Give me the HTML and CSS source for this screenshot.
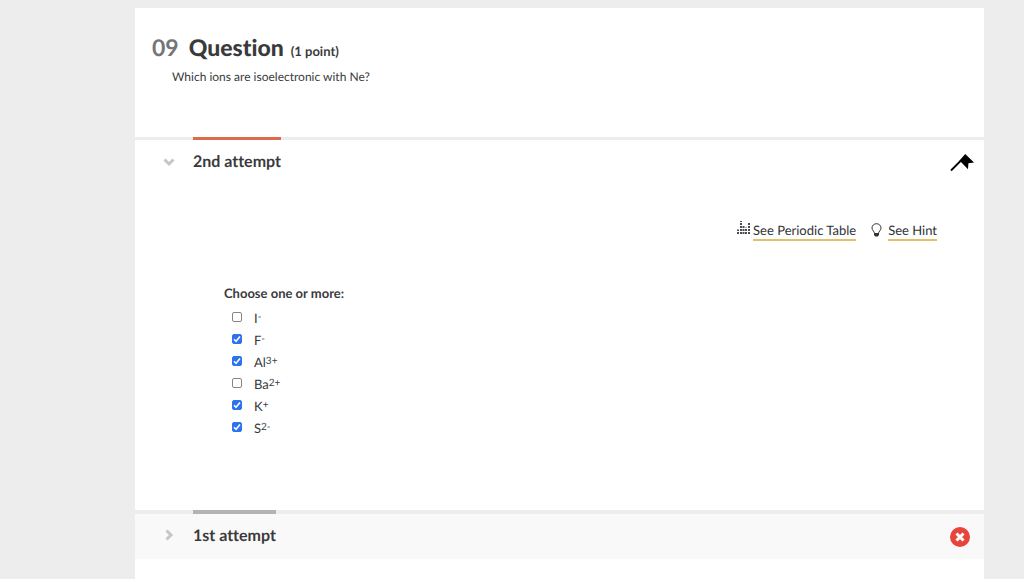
FILE: index.html
```html
<!DOCTYPE html>
<html lang="en">
<head>
    <meta charset="UTF-8">
    <meta name="viewport" content="width=device-width, initial-scale=1.0">
    <title>09 Question</title>
    <link rel="stylesheet" href="styles.css">
</head>
<body>
    <main class="card">
        <header class="question">
            <h1 class="question-title">
                <span class="question-number">09</span>
                <span class="question-name">Question</span>
                <span class="question-points">(1 point)</span>
            </h1>
            <p class="question-text">Which ions are isoelectronic with Ne?</p>
        </header>

        <section class="attempt">
            <div class="attempt-header">
                <button type="button" class="attempt-toggle open" aria-expanded="true">
                    <svg class="chevron" viewBox="0 0 12 12" aria-hidden="true">
                        <path d="M1.500 3.500 L6 8 L10.500 3.500"/>
                    </svg>
                    <span class="attempt-name">2nd attempt</span>
                </button>
                <svg class="flag" viewBox="0 0 24 18" aria-hidden="true">
                    <path d="M1 16.500 L10.500 7" fill="none" stroke="#000" stroke-width="1.800"/>
                    <path d="M15.200 0 L24 8.600 L18.400 9.200 L18 15.200 L9.500 6.400 Z"/>
                </svg>
            </div>

            <div class="attempt-body">
                <nav class="tools">
                    <a href="#periodic-table" class="tool">
                        <svg class="icon-table" viewBox="0 0 13 13" aria-hidden="true">
                            <path d="M1 13V8.500 M4 13V0 M6.500 13V4.500 M9 13V6.500 M12 13V1.500"/>
                        </svg>
                        <span>See Periodic Table</span>
                    </a>
                    <a href="#hint" class="tool">
                        <svg class="icon-bulb" viewBox="0 0 11 14" aria-hidden="true">
                            <path d="M3.500 10.500 C3.500 8.500 1 7.500 1 4.900 A4.500 4.200 0 0 1 10 4.900 C10 7.500 7.500 8.500 7.500 10.500 Z"/>
                            <path class="bulb-base" d="M3 10 H8 V12 L6.800 13.500 H4.200 L3 12 Z"/>
                        </svg>
                        <span>See Hint</span>
                    </a>
                </nav>

                <fieldset class="choices">
                    <legend>Choose one or more:</legend>
                    <div class="choice">
                        <input type="checkbox" id="ion-i">
                        <label for="ion-i">I<sup>-</sup></label>
                    </div>
                    <div class="choice">
                        <input type="checkbox" id="ion-f" checked>
                        <label for="ion-f">F<sup>-</sup></label>
                    </div>
                    <div class="choice">
                        <input type="checkbox" id="ion-al" checked>
                        <label for="ion-al">Al<sup>3+</sup></label>
                    </div>
                    <div class="choice">
                        <input type="checkbox" id="ion-ba">
                        <label for="ion-ba">Ba<sup>2+</sup></label>
                    </div>
                    <div class="choice">
                        <input type="checkbox" id="ion-k" checked>
                        <label for="ion-k">K<sup>+</sup></label>
                    </div>
                    <div class="choice">
                        <input type="checkbox" id="ion-s" checked>
                        <label for="ion-s">S<sup>2-</sup></label>
                    </div>
                </fieldset>
            </div>
        </section>

        <section class="attempt collapsed">
            <div class="attempt-header">
                <button type="button" class="attempt-toggle" aria-expanded="false">
                    <svg class="chevron" viewBox="0 0 12 12" aria-hidden="true">
                        <path d="M3.500 1.500 L8 6 L3.500 10.500"/>
                    </svg>
                    <span class="attempt-name">1st attempt</span>
                </button>
                <svg class="wrong" viewBox="0 0 20 20" aria-hidden="true">
                    <circle cx="10" cy="10" r="10" fill="#e5453b"/>
                    <path d="M6.500 6.500 L13.500 13.500 M13.500 6.500 L6.500 13.500"/>
                </svg>
            </div>
        </section>
    </main>
</body>
</html>
```

FILE: styles.css
```css
* {
    box-sizing: border-box;
}

body {
    margin: 0;
    padding: 8px 40px 0 135px;
    min-height: 100vh;
    display: flex;
    background-color: #ededed;
    color: #3a3a3c;
    font-family: Lato, sans-serif;
    font-size: 13px;
    font-variant-ligatures: none;
    text-rendering: geometricPrecision;
}

.card {
    flex: 1;
    background-color: #fff;
}

.question {
    padding: 24px 17px 51px;
}

.question-title {
    display: flex;
    align-items: baseline;
    margin: 0;
    font-size: 23px;
    line-height: 30px;
}

.question-number {
    margin-right: 10px;
    color: #737577;
}

.question-name {
    margin-right: 7px;
    font-weight: 900;
}

.question-points {
    font-size: 13px;
}

.question-text {
    margin: 2px 0 0 20px;
    font-size: 12px;
    line-height: 18px;
}

.attempt {
    border-top: 3px solid #ededed;
}

.attempt-header {
    display: flex;
    justify-content: space-between;
    align-items: center;
    height: 45px;
    padding: 0 10px 0 28px;
}

.attempt-toggle {
    display: flex;
    align-items: center;
    gap: 18px;
    align-self: flex-start;
    margin-top: -3px;
    padding: 0;
    border: none;
    background: none;
    color: inherit;
    font: inherit;
    font-size: 16px;
    font-weight: bold;
    line-height: 43px;
    text-rendering: inherit;
    cursor: pointer;
}

.attempt-name {
    border-top: 3px solid #b3b3b3;
}

.open .attempt-name {
    border-top-color: #dc6b4d;
}

.chevron {
    width: 12px;
    height: 12px;
    margin-top: 3px;
    fill: none;
    stroke: #c6c6c6;
    stroke-width: 3;
}

.flag {
    width: 24px;
    height: 18px;
}

.attempt-body {
    padding: 36px 47px 72px 89px;
}

.tools {
    display: flex;
    justify-content: flex-end;
    gap: 15px;
}

.tool {
    display: flex;
    align-items: flex-start;
    color: #2f3336;
    line-height: 18px;
    text-decoration: none;
}

.tool span {
    border-bottom: 2px solid #dfc36b;
}

.icon-table {
    width: 13px;
    height: 13px;
    margin-right: 3px;
    stroke: #4a4d50;
    stroke-width: 2;
    stroke-dasharray: 2 1;
}

.icon-bulb {
    width: 11px;
    height: 14px;
    margin: 2px 6px 0 0;
    fill: none;
    stroke: #2f3336;
}

.bulb-base {
    fill: #2f3336;
    stroke: none;
}

.choices {
    margin: 42px 0 0;
    padding: 0;
    border: none;
}

.choices legend {
    padding: 0;
    margin-bottom: 3px;
    font-weight: bold;
    line-height: 20px;
}

.choice {
    display: flex;
    align-items: center;
    gap: 12px;
    height: 22px;
    padding-left: 8px;
}

.choice input {
    appearance: none;
    width: 10px;
    height: 10px;
    margin: 0;
    border: 1px solid #858585;
    border-radius: 2px;
    background-color: #fff;
}

.choice input:checked {
    border-color: #2f72ee;
    background: #2f72ee url("data:image/svg+xml,%3Csvg xmlns='http://www.w3.org/2000/svg' viewBox='0 0 8 8'%3E%3Cpath d='M1 4.300 L3 6.300 L7 1.500' fill='none' stroke='white' stroke-width='1.500'/%3E%3C/svg%3E") center / 8px 8px no-repeat;
}

.choice label {
    padding-top: 2px;
    line-height: 20px;
}

.choice sup {
    position: relative;
    top: -3px;
    font-size: 10px;
    line-height: 0;
    vertical-align: baseline;
}

.collapsed {
    border-top-width: 4px;
    background-color: #f9f9f9;
}

.collapsed .attempt-toggle {
    margin-top: -4px;
}

.collapsed .attempt-name {
    border-top-width: 4px;
}

.wrong {
    width: 20px;
    height: 20px;
    margin-right: 4px;
}

.wrong path {
    stroke: #fff;
    stroke-width: 3;
}
```
